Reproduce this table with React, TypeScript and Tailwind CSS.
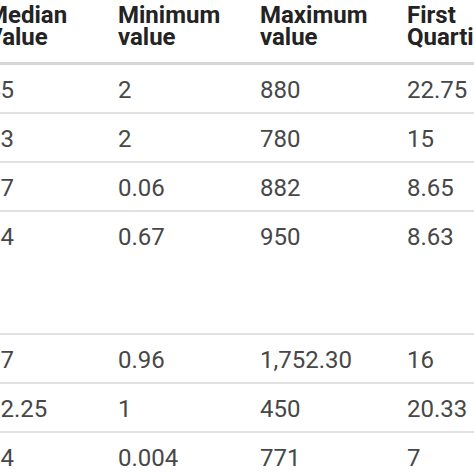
const header = ["Median Value", "Minimum value", "Maximum value", "First Quartile"];

const rows: { cells: string[]; tall?: boolean }[] = [
  { cells: ["45", "2", "880", "22.75"] },
  { cells: ["13", "2", "780", "15"] },
  { cells: ["17", "0.06", "882", "8.65"] },
  { cells: ["14", "0.67", "950", "8.63"], tall: true },
  { cells: ["17", "0.96", "1,752.30", "16"] },
  { cells: ["12.25", "1", "450", "20.33"] },
  { cells: ["14", "0.004", "771", "7"] },
];

export default function App() {
  return (
    <div className="h-[474px] w-[474px] overflow-hidden bg-white" style={{ fontFamily: "Roboto, 'Liberation Sans', sans-serif" }}>
      <div className="ml-[-13px] w-[600px]">
        <div className="grid grid-cols-[131px_142px_147px_120px] border-b-[3px] border-[#d6d6d6] pb-[14px] pt-[4px] text-[24px] font-bold leading-[22px] text-[#232323]">
          {header.map((h) => (
            <div key={h} className="pr-2">
              {h}
            </div>
          ))}
        </div>
        {rows.map((row, i) => (
          <div
            key={i}
            className={`grid grid-cols-[131px_142px_147px_120px] border-b-2 border-[#e2e2e2] pt-[11px] text-[24px] leading-[28px] text-[#474747] ${
              row.tall ? "h-[123px]" : "h-[49px]"
            }`}
          >
            {row.cells.map((c, j) => (
              <div key={j}>{c}</div>
            ))}
          </div>
        ))}
      </div>
    </div>
  );
}
